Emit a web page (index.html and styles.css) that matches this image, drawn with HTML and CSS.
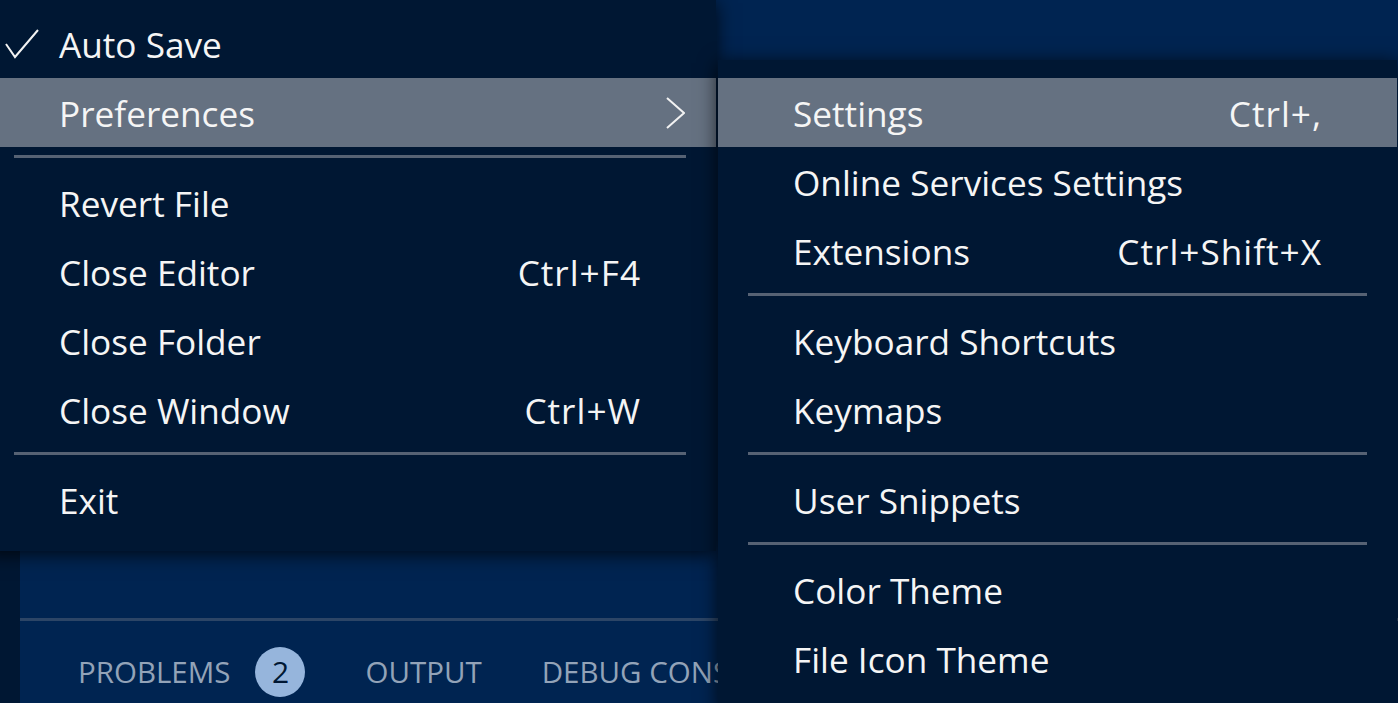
FILE: index.html
```html
<!DOCTYPE html>
<html lang="en">
  <head>
    <meta charset="UTF-8" />
    <meta name="viewport" content="width=device-width, initial-scale=1.0" />
    <title>File menu - Preferences</title>
    <link rel="stylesheet" href="styles.css">
  </head>
  <body>
    <div class="workbench">
      <div class="activitybar"></div>
      <div class="main">
        <div class="editor"></div>
        <div class="panel">
          <div class="panelTabs">
            <span class="tab">PROBLEMS <span class="badge">2</span></span>
            <span class="tab">OUTPUT</span>
            <span class="tab">DEBUG CONSOLE</span>
          </div>
        </div>
      </div>
    </div>

    <!-- file menu -->
    <div class="menu fileMenu">
      <div class="item">
        <span class="check">
          <svg width="34" height="30" viewBox="0 0 34 30"><path d="M1 15 L10 28 L33 1" fill="none" stroke="#f2f2f2" stroke-width="2" /></svg>
        </span>
        <span class="label">Auto Save</span>
        <span class="arrow"></span>
      </div>
      <div class="item active">
        <span class="check"></span>
        <span class="label">Preferences</span>
        <span class="arrow">
          <svg width="19" height="32" viewBox="0 0 19 32"><path d="M1 1 L18 16 L1 31" fill="none" stroke="#f2f2f2" stroke-width="2" /></svg>
        </span>
      </div>
      <div class="sep"></div>
      <div class="item"><span class="check"></span><span class="label">Revert File</span><span class="arrow"></span></div>
      <div class="item"><span class="check"></span><span class="label">Close Editor</span><span class="keys">Ctrl+F4</span><span class="arrow"></span></div>
      <div class="item"><span class="check"></span><span class="label">Close Folder</span><span class="arrow"></span></div>
      <div class="item"><span class="check"></span><span class="label">Close Window</span><span class="keys">Ctrl+W</span><span class="arrow"></span></div>
      <div class="sep"></div>
      <div class="item"><span class="check"></span><span class="label">Exit</span><span class="arrow"></span></div>
    </div>

    <!-- preferences submenu -->
    <div class="menu subMenu">
      <div class="item active"><span class="check"></span><span class="label">Settings</span><span class="keys">Ctrl+,</span><span class="arrow"></span></div>
      <div class="item"><span class="check"></span><span class="label">Online Services Settings</span><span class="arrow"></span></div>
      <div class="item"><span class="check"></span><span class="label">Extensions</span><span class="keys">Ctrl+Shift+X</span><span class="arrow"></span></div>
      <div class="sep"></div>
      <div class="item"><span class="check"></span><span class="label">Keyboard Shortcuts</span><span class="arrow"></span></div>
      <div class="item"><span class="check"></span><span class="label">Keymaps</span><span class="arrow"></span></div>
      <div class="sep"></div>
      <div class="item"><span class="check"></span><span class="label">User Snippets</span><span class="arrow"></span></div>
      <div class="sep"></div>
      <div class="item"><span class="check"></span><span class="label">Color Theme</span><span class="arrow"></span></div>
      <div class="item"><span class="check"></span><span class="label">File Icon Theme</span><span class="arrow"></span></div>
    </div>
  </body>
</html>
```

FILE: styles.css
```css
body {
  margin: 0;
  background: #002451;
  font-family: "Open Sans", "Noto Sans", sans-serif;
  overflow: hidden;
}
.workbench {
  display: flex;
  width: 100%;
  height: 100vh;
}
.activitybar {
  width: 20px;
  background-color: #001733;
}
.main {
  flex: 1;
  display: flex;
  flex-direction: column;
}
.editor {
  flex: 1;
  background-color: #002451;
}
.panel {
  height: 82px;
  border-top: 3px solid #2c4566;
  overflow: hidden;
}
.panelTabs {
  height: 101px;
  display: flex;
  align-items: center;
  gap: 60px;
  padding-left: 58px;
  white-space: nowrap;
}
.tab {
  display: flex;
  align-items: center;
  color: #93a3b8;
  font-size: 29.5px;
}
.badge {
  display: flex;
  justify-content: center;
  align-items: center;
  width: 50px;
  height: 50px;
  margin-left: 25px;
  border-radius: 50%;
  background-color: #96b5dc;
  color: #001733;
  font-size: 30px;
}

/* menus */
.menu {
  position: absolute;
  background-color: #001733;
  box-shadow: 0 3px 18px rgba(0, 0, 0, 0.75);
  color: #f5f5f5;
  font-size: 35.2px;
}
.fileMenu {
  top: 0;
  left: -16px;
  width: 732px;
  padding: 9px 0 17px;
}
.subMenu {
  top: 60px;
  left: 718px;
  width: 679px;
  padding: 18px 0;
}
.item {
  display: flex;
  align-items: center;
  height: 67px;
  border-top: 1px solid transparent;
  border-bottom: 1px solid transparent;
  white-space: nowrap;
}
.item.active {
  background-color: #657181;
}
.check {
  width: 75px;
  flex: none;
  display: flex;
  padding-left: 21px;
  box-sizing: border-box;
}
.label {
  flex: 1;
}
.keys {
  flex: none;
  letter-spacing: 1px;
  margin-right: -1px;
}
.arrow {
  width: 76px;
  flex: none;
  display: flex;
  padding-left: 26px;
  box-sizing: border-box;
}
.sep {
  margin: 8px 30px 10px;
  border-bottom: 3px solid #566274;
}
```
